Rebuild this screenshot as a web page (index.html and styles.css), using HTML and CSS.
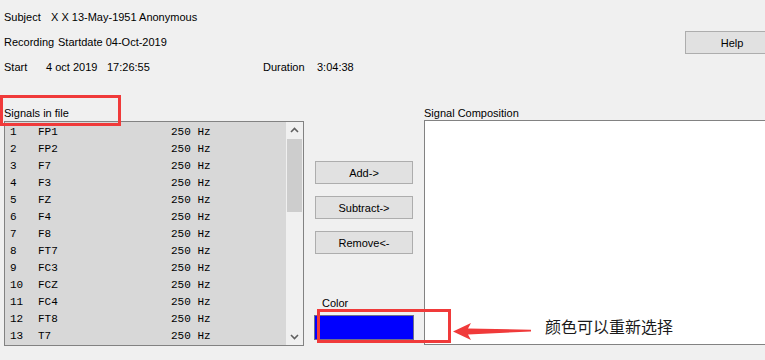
FILE: index.html
```html
<!DOCTYPE html>
<html>
<head>
<meta charset="utf-8">
<link rel="stylesheet" href="styles.css">
</head>
<body>
<div class="window">
  <div class="header">
    <div class="info">
      <div class="info-row"><span class="lbl w47">Subject</span><span>X X 13-May-1951 Anonymous</span></div>
      <div class="info-row"><span class="lbl w54">Recording</span><span>Startdate 04-Oct-2019</span></div>
      <div class="info-row"><span class="lbl w42">Start</span><span class="w61">4 oct 2019</span><span class="w156">17:26:55</span><span class="w54">Duration</span><span>3:04:38</span></div>
    </div>
    <button class="btn help">Help</button>
  </div>

  <div class="main">
    <div class="left">
      <div class="label">Signals in file</div>
      <div class="listbox">
        <div class="rows">
          <div class="row"><span class="num">1</span><span class="name">FP1</span><span>250 Hz</span></div>
          <div class="row"><span class="num">2</span><span class="name">FP2</span><span>250 Hz</span></div>
          <div class="row"><span class="num">3</span><span class="name">F7</span><span>250 Hz</span></div>
          <div class="row"><span class="num">4</span><span class="name">F3</span><span>250 Hz</span></div>
          <div class="row"><span class="num">5</span><span class="name">FZ</span><span>250 Hz</span></div>
          <div class="row"><span class="num">6</span><span class="name">F4</span><span>250 Hz</span></div>
          <div class="row"><span class="num">7</span><span class="name">F8</span><span>250 Hz</span></div>
          <div class="row"><span class="num">8</span><span class="name">FT7</span><span>250 Hz</span></div>
          <div class="row"><span class="num">9</span><span class="name">FC3</span><span>250 Hz</span></div>
          <div class="row"><span class="num">10</span><span class="name">FCZ</span><span>250 Hz</span></div>
          <div class="row"><span class="num">11</span><span class="name">FC4</span><span>250 Hz</span></div>
          <div class="row"><span class="num">12</span><span class="name">FT8</span><span>250 Hz</span></div>
          <div class="row"><span class="num">13</span><span class="name">T7</span><span>250 Hz</span></div>
        </div>
        <div class="scrollbar">
          <div class="arrow">
            <svg width="17" height="17" viewBox="0 0 17 17"><polyline points="5,10 8.5,6.5 12,10" fill="none" stroke="#606060" stroke-width="1.6"/></svg>
          </div>
          <div class="track"><div class="thumb"></div></div>
          <div class="arrow">
            <svg width="17" height="17" viewBox="0 0 17 17"><polyline points="5,7 8.5,10.5 12,7" fill="none" stroke="#606060" stroke-width="1.6"/></svg>
          </div>
        </div>
      </div>
      <div class="mark mark-signals"></div>
    </div>

    <div class="middle">
      <button class="btn action">Add-&gt;</button>
      <button class="btn action">Subtract-&gt;</button>
      <button class="btn action">Remove&lt;-</button>
      <div class="color-group">
        <div class="color-label">Color</div>
        <div class="swatch"></div>
      </div>
    </div>

    <div class="right">
      <div class="label">Signal Composition</div>
      <div class="composition"></div>
    </div>
  </div>

  <div class="mark mark-color"></div>
  <svg class="anno-arrow" width="85" height="26" viewBox="450 318 85 26">
    <polygon points="453,331.5 471,323 468,328.5 531,329.8 531,331.4 468,334.6 471,340" fill="#f03a3a"/>
  </svg>
  <div class="anno-text">颜色可以重新选择</div>
</div>
</body>
</html>
```

FILE: styles.css
```css
html, body {
  margin: 0;
  padding: 0;
}
body {
  background: #f0f0f0;
  width: 765px;
  height: 360px;
  overflow: hidden;
  font-family: "Liberation Sans", Arial, sans-serif;
  font-size: 11px;
  color: #000;
}
.window {
  position: relative;
  width: 765px;
  height: 360px;
  overflow: hidden;
}
.header {
  display: flex;
  justify-content: space-between;
  padding-top: 5px;
  padding-left: 4px;
}
.info-row {
  display: flex;
  height: 25px;
  line-height: 25px;
  white-space: nowrap;
}
.info-row span { flex-shrink: 0; }
.w42 { width: 42px; }
.w47 { width: 47px; }
.w54 { width: 54px; }
.w61 { width: 61px; }
.w156 { width: 156px; }

.btn {
  font-family: "Liberation Sans", Arial, sans-serif;
  font-size: 11px;
  color: #000;
  background: #e1e1e1;
  border: 1px solid #adadad;
  padding: 0;
  margin: 0;
  height: 23px;
  box-sizing: border-box;
}
.help {
  width: 94px;
  margin-top: 26px;
  margin-right: -14px;
  flex-shrink: 0;
}

.main {
  display: flex;
  margin-top: 26px;
  height: 239px;
}
.main > div { flex-shrink: 0; }
.label {
  height: 14px;
  line-height: 14px;
  white-space: nowrap;
}
.left {
  position: relative;
  margin-left: 4px;
  width: 300px;
  display: flex;
  flex-direction: column;
}
.left .label {
  margin-bottom: 1px;
}
.listbox {
  flex: 1;
  display: flex;
  border: 1px solid #828282;
  background: #d8d8d8;
}
.rows {
  flex: 1;
  padding: 2px 0 0 5px;
  font-family: "Liberation Mono", "Courier New", monospace;
  font-size: 11px;
  color: #000;
}
.row {
  display: flex;
  height: 17px;
  line-height: 17px;
  white-space: nowrap;
}
.num { width: 28px; }
.name { width: 133px; }
.scrollbar {
  width: 17px;
  background: #f0f0f0;
  display: flex;
  flex-direction: column;
}
.arrow {
  height: 17px;
}
.arrow svg { display: block; }
.track {
  flex: 1;
  padding: 0 1px;
}
.thumb {
  height: 73px;
  background: #cdcdcd;
}

.middle {
  margin-left: 11px;
  width: 98px;
  display: flex;
  flex-direction: column;
  gap: 12px;
  padding-top: 55px;
  padding-bottom: 5px;
  box-sizing: border-box;
}
.action {
  width: 98px;
}
.color-group {
  margin-top: auto;
}
.color-label {
  height: 14px;
  line-height: 14px;
  padding-left: 7px;
  margin-bottom: 5px;
}
.swatch {
  width: 100px;
  height: 25px;
  margin-left: -1px;
  box-sizing: border-box;
  background: #0000ff;
  border: 1px solid #6e6e8a;
}

.right {
  margin-left: 11px;
  width: 380px;
  display: flex;
  flex-direction: column;
}
.composition {
  flex: 1;
  background: #fff;
  border: 1px solid #828282;
  border-right: none;
}

.mark {
  position: absolute;
  border: 3px solid #f03a3a;
  box-sizing: border-box;
}
.mark-signals {
  left: -4px;
  top: -11px;
  width: 121px;
  height: 31px;
}
.mark-color {
  left: 317px;
  top: 309px;
  width: 134px;
  height: 34px;
}
.anno-arrow {
  position: absolute;
  left: 450px;
  top: 318px;
}
.anno-text {
  position: absolute;
  left: 545px;
  top: 314px;
  font-family: "Noto Sans CJK SC", sans-serif;
  font-size: 16px;
  line-height: 24px;
  color: #1a1a1a;
  white-space: nowrap;
}
```
